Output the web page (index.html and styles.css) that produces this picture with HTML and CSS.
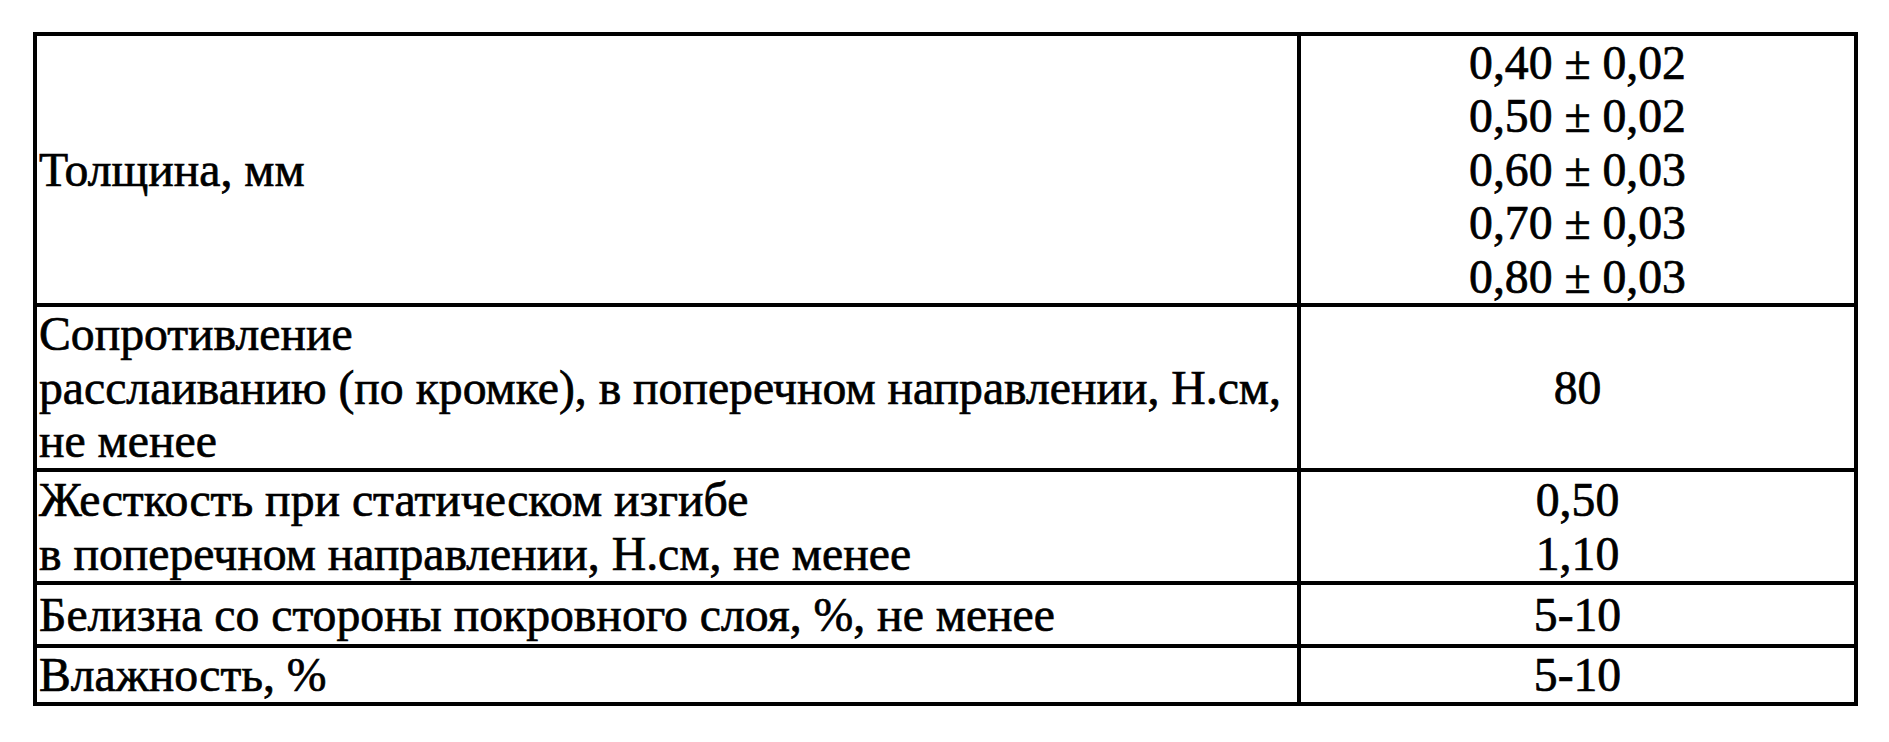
FILE: index.html
```html
<!DOCTYPE html>
<html lang="ru">
<head>
<meta charset="utf-8">
<title>Таблица</title>
<link rel="stylesheet" href="styles.css">
</head>
<body>
<div class="spec">
  <div class="cell name">Толщина, мм</div>
  <div class="cell value">
    <span>0,40 ± 0,02</span>
    <span>0,50 ± 0,02</span>
    <span>0,60 ± 0,03</span>
    <span>0,70 ± 0,03</span>
    <span>0,80 ± 0,03</span>
  </div>
  <div class="cell name">
    <span>Сопротивление</span>
    <span>расслаиванию (по кромке), в поперечном направлении, Н.см,</span>
    <span>не менее</span>
  </div>
  <div class="cell value"><span>80</span></div>
  <div class="cell name">
    <span>Жесткость при статическом изгибе</span>
    <span>в поперечном направлении, Н.см, не менее</span>
  </div>
  <div class="cell value">
    <span>0,50</span>
    <span>1,10</span>
  </div>
  <div class="cell name">Белизна со стороны покровного слоя, %, не менее</div>
  <div class="cell value"><span>5-10</span></div>
  <div class="cell name">Влажность, %</div>
  <div class="cell value"><span>5-10</span></div>
</div>
</body>
</html>
```
FILE: styles.css
```css
html, body {
  margin: 0;
  padding: 0;
  background: #ffffff;
}

body {
  width: 1889px;
  height: 742px;
  overflow: hidden;
  font-family: "Liberation Serif", "Times New Roman", serif;
  color: #000;
}

.spec {
  margin: 32px 0 0 33px;
  width: 1825px;
  box-sizing: border-box;
  display: grid;
  grid-template-columns: 1260px 553px;
  grid-template-rows: 267px 161px 109px 59px 54px;
  gap: 4px;
  padding: 4px;
  background: #000;
}

.cell {
  background: #fff;
  font-size: 47.7px;
  line-height: 53.5px;
  -webkit-text-stroke: 0.7px #000;
  display: flex;
  flex-direction: column;
  justify-content: center;
  white-space: nowrap;
  overflow: visible;
}

.name {
  padding-left: 2px;
  align-items: flex-start;
}

.value {
  align-items: center;
}
```
